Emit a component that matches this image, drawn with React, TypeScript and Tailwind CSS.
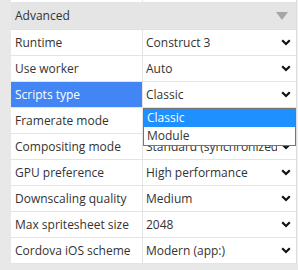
import type { ReactNode } from "react"

const rows: [string, string][] = [
    ["Runtime", "Construct 3"],
    ["Use worker", "Auto"],
    ["Scripts type", "Classic"],
    ["Framerate mode", "V-sync"],
    ["Compositing mode", "Standard (synchronized)"],
    ["GPU preference", "High performance"],
    ["Downscaling quality", "Medium"],
    ["Max spritesheet size", "2048"],
    ["Cordova iOS scheme", "Modern (app:)"],
]

function Chevron() {
    return (
        <svg width="10" height="7" viewBox="0 0 10 7" className="shrink-0">
            <path d="M1.2 1.3 L5 5 L8.8 1.3" fill="none" stroke="#111" strokeWidth="2.2" />
        </svg>
    )
}

function Row({ label, value, selected }: { label: string; value: ReactNode; selected?: boolean }) {
    return (
        <div className="grid grid-cols-[132px_1fr] h-[26px] border-b border-[#e4e4e4]">
            <div className={`flex items-center pl-[4px] border-r border-[#e4e4e4] whitespace-nowrap ${selected ? "bg-[#4285f4] text-white" : "bg-white"}`}>
                {label}
            </div>
            <div className="flex items-center gap-[4px] bg-white pl-[3px] pr-[5px] overflow-hidden">
                <span className="flex-1 whitespace-nowrap overflow-hidden">{value}</span>
                <Chevron />
            </div>
        </div>
    )
}

export default function App() {
    return (
        <div className="w-[298px] h-[270px] bg-[#e8e8e8] overflow-hidden text-[12px] text-[#333] font-['Segoe_UI','Open_Sans',sans-serif] relative">
            <div className="flex">
                <div className="w-[11px] shrink-0" />
                <div className="w-[285px] shrink-0 relative">
                    <div className="grid grid-cols-[132px_1fr] h-[3px] border-b border-[#e4e4e4]">
                        <div className="bg-white border-r border-[#e4e4e4]" />
                        <div className="bg-white" />
                    </div>
                    <div className="h-[27px] bg-[#e5e5e5] flex items-center justify-between pl-[4px] pr-[8px] border-b border-[#e0e0e0]">
                        <span>Advanced</span>
                        <svg width="12" height="8" viewBox="0 0 12 8">
                            <path d="M0 0 H12 L6 8 Z" fill="#a6a6a6" />
                        </svg>
                    </div>
                    {rows.map(([l, v], i) => (
                        <Row key={l} label={l} value={v} selected={i === 2} />
                    ))}

                    <div className="absolute left-[132px] top-[108px] w-[153px] h-[38px] border border-[#767676] bg-white">
                        <div className="h-[18px] flex items-center pl-[3px] bg-[#1e90ff] text-white">Classic</div>
                        <div className="h-[18px] flex items-center pl-[3px] bg-white">Module</div>
                    </div>
                </div>
                <div className="w-[1px] shrink-0 bg-[#dcdcdc]" />
                <div className="flex-1 bg-[#f3f3f3]" />
            </div>
        </div>
    )
}
